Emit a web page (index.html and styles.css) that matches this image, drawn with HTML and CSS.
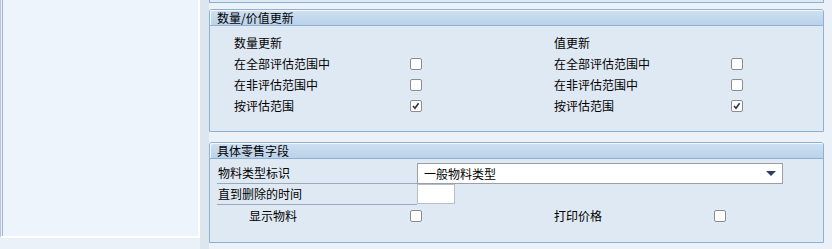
FILE: index.html
```html
<!DOCTYPE html>
<html lang="zh">
<head>
<meta charset="utf-8">
<link rel="stylesheet" href="styles.css">
</head>
<body>
<div class="page">
  <aside class="nav"></aside>
  <div class="gutter"></div>
  <main class="main">
    <div class="prev"></div>
    <section class="group g1">
      <div class="ghead">数量/价值更新</div>
      <div class="gbody grid1">
        <div class="col">
          <div class="row"><span class="lbl">数量更新</span></div>
          <div class="row"><span class="lbl">在全部评估范围中</span><span class="cb"></span></div>
          <div class="row"><span class="lbl">在非评估范围中</span><span class="cb"></span></div>
          <div class="row"><span class="lbl">按评估范围</span><span class="cb checked"><svg viewBox="0 0 12 12" width="12" height="12"><path d="M3 6 L5 8.3 L8.6 3.2" fill="none" stroke="#2b2f55" stroke-width="1.6"/></svg></span></div>
        </div>
        <div class="col">
          <div class="row"><span class="lbl">值更新</span></div>
          <div class="row"><span class="lbl">在全部评估范围中</span><span class="cb"></span></div>
          <div class="row"><span class="lbl">在非评估范围中</span><span class="cb"></span></div>
          <div class="row"><span class="lbl">按评估范围</span><span class="cb checked"><svg viewBox="0 0 12 12" width="12" height="12"><path d="M3 6 L5 8.3 L8.6 3.2" fill="none" stroke="#2b2f55" stroke-width="1.6"/></svg></span></div>
        </div>
      </div>
    </section>
    <section class="group g2">
      <div class="ghead">具体零售字段</div>
      <div class="gbody body2">
        <div class="frow">
          <span class="flbl">物料类型标识</span>
          <div class="select"><span>一般物料类型</span><span class="arrow"></span></div>
        </div>
        <div class="frow">
          <span class="flbl">直到删除的时间</span>
          <div class="input"></div>
        </div>
        <div class="crow">
          <div class="ccol c1"><span class="lbl">显示物料</span><span class="cb"></span></div>
          <div class="ccol c2"><span class="lbl">打印价格</span><span class="cb"></span></div>
        </div>
      </div>
    </section>
  </main>
</div>
</body>
</html>
```
FILE: styles.css
```css
* { box-sizing: border-box; }
html, body { margin: 0; padding: 0; }
body {
  width: 832px; height: 249px; overflow: hidden;
  background: #eaf1f8;
  font-family: "Noto Sans CJK SC", "Liberation Sans", sans-serif;
  font-size: 12px; color: #000;
}
.page { display: flex; height: 249px; }
.nav {
  width: 200px; height: 238px;
  background: #edf4fb;
  border-left: 1px solid #b6c4dc;
  box-shadow: inset 1px 0 0 #eef3fa, inset 2px 0 0 #a3b3ce;
  border-right: 2px solid #ffffff;
  border-bottom: 2px solid #ffffff;
  flex: none;
}
.gutter { width: 9px; background: #dce6ef; flex: none; }
.main { width: 615px; flex: none; display: flex; flex-direction: column; }
.prev { height: 3px; border-bottom: 1px solid #8fb0cf; background: #dfe9f4; margin-bottom: 6px; border-left: 1px solid #8fb0cf; border-right: 1px solid #8fb0cf; }
.group {
  border: 1px solid #8fb0cf;
  background: #dfe9f4;
  border-top-left-radius: 3px; border-top-right-radius: 3px;
}
.g1 { height: 123px; }
.g2 { height: 101px; margin-top: 10px; }
.ghead {
  height: 16px; line-height: 15px;
  padding-left: 7px;
  background: linear-gradient(#cfe0f1, #bad2ea);
  border-bottom: 1px solid #8fb0cf;
  border-top-left-radius: 2px; border-top-right-radius: 2px;
  box-shadow: inset 1px 1px 0 #f2f7fc;
}
.grid1 { display: grid; grid-template-columns: 320px 290px; padding: 6px 0 0 24px; }
.col { display: flex; flex-direction: column; }
.row { height: 21px; display: flex; align-items: center; }
.row .lbl { width: 176px; flex: none; }
.col + .col .row .lbl { width: 177px; }
.cb {
  width: 12px; height: 12px; flex: none;
  background: #fff;
  border: 1px solid #8d8d8d;
  border-radius: 2px;
  display: inline-flex; align-items: center; justify-content: center;
}
.cb svg { display: block; flex: none; }
.body2 { padding: 4px 0 0 7px; }
.frow { display: flex; height: 21px; align-items: stretch; }
.flbl { width: 200px; flex: none; border-bottom: 1px solid #9da8b4; line-height: 20px; padding-left: 1px; }
.select {
  width: 366px; height: 21px;
  background: #fff;
  border: 1px solid #9aa0a8;
  display: flex; align-items: center; justify-content: space-between;
  padding: 0 6px 0 6px;
}
.arrow { width: 0; height: 0; border-left: 5px solid transparent; border-right: 5px solid transparent; border-top: 5px solid #2c3e66; }
.input { width: 38px; height: 20px; background: #fff; border: 1px solid #b8bec6; }
.crow { display: flex; height: 21px; align-items: center; }
.ccol { display: flex; align-items: center; flex: none; }
.c1 { width: 337px; padding-left: 32px; }
.c1 .lbl { width: 161px; flex: none; }
.c2 .lbl { width: 160px; flex: none; }
```
